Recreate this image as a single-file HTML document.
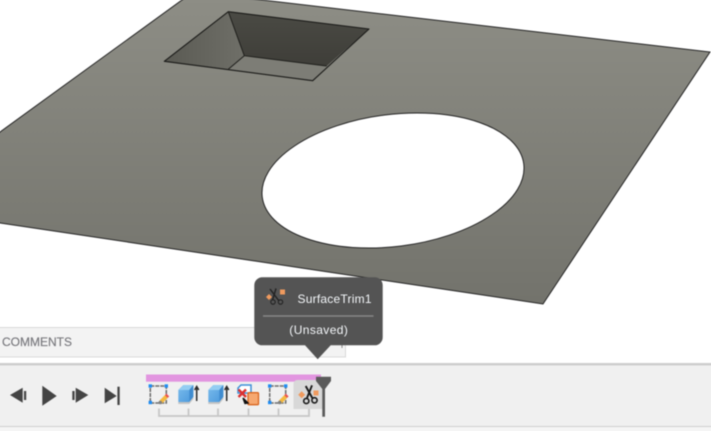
<!DOCTYPE html>
<html>
<head>
<meta charset="utf-8">
<style>
html,body{margin:0;padding:0;background:#fff;width:711px;height:431px;overflow:hidden}
#w{position:relative;width:711px;height:431px;overflow:hidden}
svg{display:block;position:absolute;left:-10px;top:-10px;filter:blur(.4px)}
text{font-family:"Liberation Sans",sans-serif}
</style>
</head>
<body>
<div id="w">
<svg width="731" height="451" viewBox="-10 -10 731 451" xmlns="http://www.w3.org/2000/svg">
<defs>
<linearGradient id="pl" gradientUnits="userSpaceOnUse" x1="0" y1="0" x2="0" y2="304">
<stop offset="0" stop-color="#8d8d85"/><stop offset="1" stop-color="#73736c"/>
</linearGradient>
<linearGradient id="bk" x1="0" y1="0" x2="0" y2="1">
<stop offset="0" stop-color="#4a4a44"/><stop offset="1" stop-color="#3f3e39"/>
</linearGradient>
<linearGradient id="lf" x1="0" y1="0" x2="1" y2="0">
<stop offset="0" stop-color="#5a5a53"/><stop offset="1" stop-color="#6f6f68"/>
</linearGradient>
<linearGradient id="bx" x1="0" y1="0" x2="1" y2="1">
<stop offset="0" stop-color="#7bbcec"/><stop offset="1" stop-color="#4a98dc"/>
</linearGradient>
<g id="sk">
<path d="M1 1H17V18H1Z" fill="none" stroke="#6c6c6c" stroke-width="1.5" stroke-dasharray="4 1"/>
<g fill="#1f8cf2"><rect x="-.7" y="-.7" width="3.4" height="3.4"/><rect x="15.3" y="-.7" width="3.4" height="3.4"/><rect x="-.7" y="15.8" width="3.4" height="3.4"/></g>
<path d="M11.5 17L17 11.5" stroke="#f5b93f" stroke-width="4"/>
<path d="M17 11.5L18.5 10" stroke="#ec4f4f" stroke-width="4"/>
<circle cx="11" cy="17.5" r="1.8" fill="#808080"/>
</g>
<g id="bxi">
<path d="M0 5L5 0H15V12L11 17H0Z" fill="url(#bx)"/>
<path d="M0 5L5 0H15L11 5Z" fill="#93cdf2"/>
<path d="M11 5L15 0V12L11 17Z" fill="#3f8ccf"/>
<path d="M0 17H11L15 12V14L11 19H0Z" fill="#c4c4c4"/>
<path d="M18.4 16V2M16.3 5L18.4 1.5L20.5 5" fill="none" stroke="#2a2a2a" stroke-width="1.5"/>
</g>
</defs>

<path d="M-20 146.5L193 -8L710 52L543 304L-20 220Z" fill="url(#pl)" stroke="#222" stroke-width="1"/>
<ellipse cx="393" cy="180.5" rx="131.8" ry="66" transform="rotate(-7.2 393 180.5)" fill="#fff" stroke="#222" stroke-width="1"/>

<path d="M228.3 11.7L369 29L326.7 66L244.3 55.7Z" fill="url(#bk)"/>
<path d="M228.3 11.7L244.3 55.7L228.3 69.3L164.3 61.3Z" fill="url(#lf)"/>
<path d="M244.3 55.7L326.7 66L312.7 80.7L228.3 69.3Z" fill="#7d7d76"/>
<path d="M228.3 11.7L369 29L312.7 80.7L164.3 61.3Z" fill="none" stroke="#1a1a18" stroke-width="1.1" stroke-linejoin="round"/>
<path d="M228.3 11.7L244.3 55.7L326.7 66M244.3 55.7L228.3 69.3" fill="none" stroke="#1f1f1c" stroke-width="1"/>

<!-- comments panel -->
<rect x="-12" y="327.5" width="357.5" height="29.5" fill="#f3f3f3" stroke="#dadada"/>
<text x="2" y="346" font-size="12" fill="#77777c" stroke="#77777c" stroke-width=".15">COMMENTS</text>
<path d="M342 342V348M340 343H342" stroke="#888" stroke-width="1" fill="none"/>

<!-- timeline bar -->
<rect x="-10" y="364" width="731" height="63" fill="#f0f0f0"/>
<rect x="-10" y="363" width="731" height="2.4" fill="#cdcdcd"/>
<rect x="-10" y="426" width="731" height="1" fill="#cfcfcf"/>
<rect x="-10" y="427" width="731" height="14" fill="#f5f5f5"/>

<g fill="#444">
<path d="M10 395L22.7 387.7V402.7Z"/><rect x="24" y="391" width="2.2" height="9"/>
<path d="M42.3 385.7L56.7 396L42.3 405.7Z"/>
<rect x="72.3" y="391" width="2.3" height="9"/><path d="M75.7 387.7L88.3 395L75.7 402.7Z"/>
<path d="M104.7 387.7L116.7 396L104.7 403.3Z"/><rect x="117.4" y="386.7" width="2.3" height="18.3"/>
</g>

<rect x="146" y="374.5" width="175" height="7.2" fill="#e295e0"/>

<path d="M159 408.5V416H309V408.5M188.5 408.5V416M218 408.5V416M248.5 408.5V416M278.5 408.5V416" fill="none" stroke="#c6c6c6" stroke-width="1.8"/>

<path d="M293.5 384a4 4 0 0 1 4-4H323V409H293.5Z" fill="#d8d8d8"/>

<use href="#sk" x="149.3" y="385"/>
<use href="#bxi" x="178.3" y="385"/>
<use href="#bxi" x="208.3" y="385"/>

<!-- delete/copy icon -->
<path d="M238 388L241 385H251V393H238Z" fill="#fff" stroke="#3d90d8" stroke-width="1.5"/>
<rect x="248" y="392.7" width="10.5" height="12" rx="1" fill="#f6a870" stroke="#d9661f" stroke-width="1.3"/>
<path d="M238.5 389.5L246 397M246 389.5L238.5 397" stroke="#dc3030" stroke-width="2.4"/>
<path d="M243 398L248 403L245 403.5Z" fill="#111" stroke="#111" stroke-width="1.4"/>

<use href="#sk" x="268.7" y="385"/>

<!-- scissors -->
<g>
<path d="M301.7 391.2L305.2 394.7L301.7 398.2L298.2 394.7Z" fill="#ef9a5e"/>
<rect x="313.5" y="390.5" width="5" height="5" fill="#ef9a5e"/>
<path d="M305.7 386L312.3 398M312 385.3L307 398" stroke="#1a1a1a" stroke-width="1.9" fill="none"/>
<circle cx="306.3" cy="401" r="2.6" fill="none" stroke="#1a1a1a" stroke-width="1.6"/>
<circle cx="314.5" cy="400.3" r="2.6" fill="none" stroke="#1a1a1a" stroke-width="1.6"/>
</g>

<!-- marker -->
<path d="M316 376.7H331V381L325 389V416.7H322.3V389L316 381Z" fill="#5a5a5a"/>

<!-- tooltip -->
<path d="M262.3 277.3H374.7a8 8 0 0 1 8 8V337.3a8 8 0 0 1 -8 8H330.7L317.7 359.3L305 345.3H262.3a8 8 0 0 1 -8 -8V285.3a8 8 0 0 1 8 -8Z" fill="#545454"/>
<rect x="263" y="315.3" width="110.5" height="1.4" fill="#8b8b8b"/>
<text x="297.5" y="303" font-size="12" letter-spacing=".22" fill="#f4f7fa">SurfaceTrim1</text>
<text x="289.3" y="334" font-size="12" letter-spacing=".4" fill="#f4f7fa">(Unsaved)</text>
<path d="M269 294L272 297L269 300L266 297Z" fill="#ef9a5e"/>
<rect x="280" y="289.5" width="5" height="5" fill="#ef9a5e"/>
<path d="M270 289L279 301M276 288.5L272.5 300" stroke="#222" stroke-width="1.4" fill="none"/>
<circle cx="273" cy="302" r="2.2" fill="none" stroke="#222" stroke-width="1.1"/>
<circle cx="280.5" cy="302" r="2.2" fill="none" stroke="#222" stroke-width="1.1"/>
</svg>
</div>
</body>
</html>
